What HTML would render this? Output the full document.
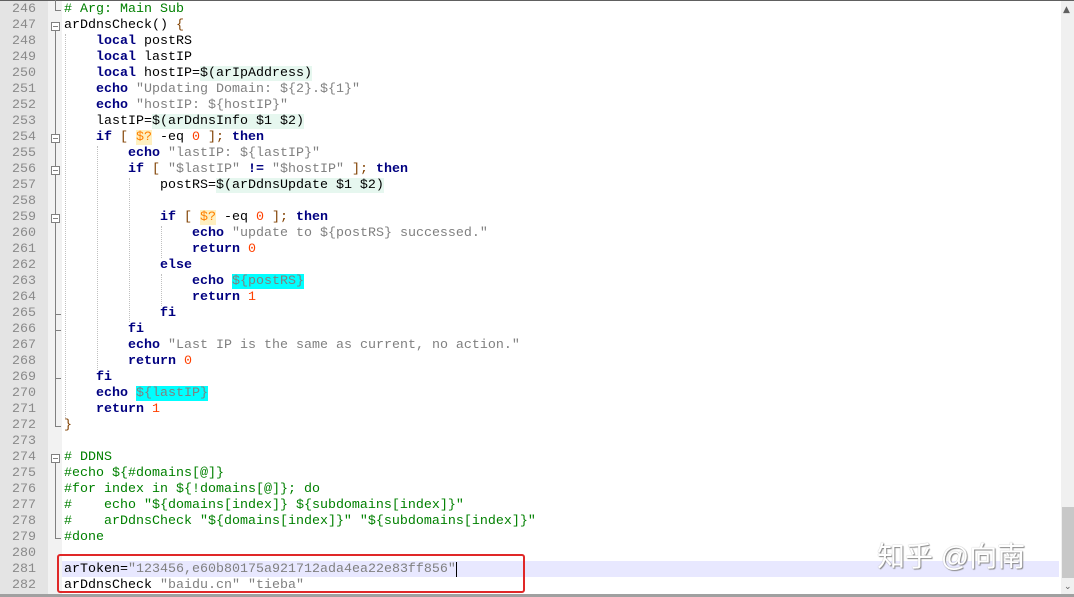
<!DOCTYPE html>
<html><head><meta charset="utf-8"><style>
html,body{margin:0;padding:0;width:1074px;height:597px;overflow:hidden;background:#fff}
body{position:relative;font-family:"Liberation Mono","Courier New",monospace;font-size:13.33px}
.gut{position:absolute;left:0;top:0;width:48px;height:594px;background:#e4e4e4}
.fold{position:absolute;left:48px;top:0;width:14px;height:594px;background:#f2f2f2}
.ln{position:absolute;left:0;width:36px;text-align:right;color:#8a8a8a;height:16px;line-height:16px;margin-top:2px}
.l{position:absolute;left:64px;height:16px;line-height:16px;white-space:pre;color:#000;margin-top:2px}
.k{color:#000080;font-weight:bold}
.s{color:#808080}
.c{color:#008000}
.n{color:#ff4000}
.v{background:#e6f7ef}
.q{background:#fff0c0;color:#ff8000}
.h{background:#00ffff;color:#808080}
.bx{position:absolute;left:51px;width:9px;height:9px;border:1px solid #808080;background:#fff;box-sizing:border-box}
.bx:after{content:"";position:absolute;left:1px;top:3px;width:5px;height:1px;background:#808080}
.vl{position:absolute;left:55px;width:1px;background:#808080}
.tk{position:absolute;left:55px;width:6px;height:1px;background:#808080}
.gd{position:absolute;width:0;border-left:1px dotted #c0c0c0}
</style></head><body>
<div class="gut"></div><div class="fold"></div>
<div style="position:absolute;left:62px;top:561px;width:997px;height:16px;background:#e8e8ff"></div>
<div style="position:absolute;left:0;top:594px;width:1074px;height:3px;background:#a0a0a0"></div>
<div style="position:absolute;left:0;top:0;width:1074px;height:1px;background:#606060"></div>

<div class="vl" style="top:0;height:10px"></div><div class="tk" style="top:10px"></div>
<div class="bx" style="top:22px"></div>
<div class="vl" style="top:31px;height:396px"></div>
<div class="bx" style="top:134px"></div>
<div class="bx" style="top:166px"></div>
<div class="bx" style="top:214px"></div>
<div class="tk" style="top:314px"></div>
<div class="tk" style="top:330px"></div>
<div class="tk" style="top:378px"></div>
<div class="tk" style="top:426px"></div>
<div class="bx" style="top:454px"></div>
<div class="vl" style="top:463px;height:76px"></div><div class="tk" style="top:538px"></div>
<div class="gd" style="left:97px;top:146px;height:224px"></div>
<div class="gd" style="left:129px;top:178px;height:144px"></div>
<div class="gd" style="left:161px;top:226px;height:32px"></div>
<div class="gd" style="left:161px;top:274px;height:32px"></div>
<div class="gd" style="left:65px;top:34px;height:384px"></div>

<div class="ln" style="top:0">246</div><div class="l" style="top:0"><span class="c"># Arg: Main Sub</span></div>
<div class="ln" style="top:16px">247</div><div class="l" style="top:16px">arDdnsCheck() <span style="color:#804000">{</span></div>
<div class="ln" style="top:32px">248</div><div class="l" style="top:32px">    <span class="k">local</span> postRS</div>
<div class="ln" style="top:48px">249</div><div class="l" style="top:48px">    <span class="k">local</span> lastIP</div>
<div class="ln" style="top:64px">250</div><div class="l" style="top:64px">    <span class="k">local</span> hostIP=<span class="v">$(arIpAddress)</span></div>
<div class="ln" style="top:80px">251</div><div class="l" style="top:80px">    <span class="k">echo</span> <span class="s">"Updating Domain: ${2}.${1}"</span></div>
<div class="ln" style="top:96px">252</div><div class="l" style="top:96px">    <span class="k">echo</span> <span class="s">"hostIP: ${hostIP}"</span></div>
<div class="ln" style="top:112px">253</div><div class="l" style="top:112px">    lastIP=<span class="v">$(arDdnsInfo $1 $2)</span></div>
<div class="ln" style="top:128px">254</div><div class="l" style="top:128px">    <span class="k">if</span> <span style="color:#804000">[</span> <span class="q">$?</span> -eq <span class="n">0</span> <span style="color:#804000">];</span> <span class="k">then</span></div>
<div class="ln" style="top:144px">255</div><div class="l" style="top:144px">        <span class="k">echo</span> <span class="s">"lastIP: ${lastIP}"</span></div>
<div class="ln" style="top:160px">256</div><div class="l" style="top:160px">        <span class="k">if</span> <span style="color:#804000">[</span> <span class="s">"$lastIP"</span> <span class="k">!=</span> <span class="s">"$hostIP"</span> <span style="color:#804000">];</span> <span class="k">then</span></div>
<div class="ln" style="top:176px">257</div><div class="l" style="top:176px">            postRS=<span class="v">$(arDdnsUpdate $1 $2)</span></div>
<div class="ln" style="top:192px">258</div>
<div class="ln" style="top:208px">259</div><div class="l" style="top:208px">            <span class="k">if</span> <span style="color:#804000">[</span> <span class="q">$?</span> -eq <span class="n">0</span> <span style="color:#804000">];</span> <span class="k">then</span></div>
<div class="ln" style="top:224px">260</div><div class="l" style="top:224px">                <span class="k">echo</span> <span class="s">"update to ${postRS} successed."</span></div>
<div class="ln" style="top:240px">261</div><div class="l" style="top:240px">                <span class="k">return</span> <span class="n">0</span></div>
<div class="ln" style="top:256px">262</div><div class="l" style="top:256px">            <span class="k">else</span></div>
<div class="ln" style="top:272px">263</div><div class="l" style="top:272px">                <span class="k">echo</span> <span class="h">${postRS}</span></div>
<div class="ln" style="top:288px">264</div><div class="l" style="top:288px">                <span class="k">return</span> <span class="n">1</span></div>
<div class="ln" style="top:304px">265</div><div class="l" style="top:304px">            <span class="k">fi</span></div>
<div class="ln" style="top:320px">266</div><div class="l" style="top:320px">        <span class="k">fi</span></div>
<div class="ln" style="top:336px">267</div><div class="l" style="top:336px">        <span class="k">echo</span> <span class="s">"Last IP is the same as current, no action."</span></div>
<div class="ln" style="top:352px">268</div><div class="l" style="top:352px">        <span class="k">return</span> <span class="n">0</span></div>
<div class="ln" style="top:368px">269</div><div class="l" style="top:368px">    <span class="k">fi</span></div>
<div class="ln" style="top:384px">270</div><div class="l" style="top:384px">    <span class="k">echo</span> <span class="h">${lastIP}</span></div>
<div class="ln" style="top:400px">271</div><div class="l" style="top:400px">    <span class="k">return</span> <span class="n">1</span></div>
<div class="ln" style="top:416px">272</div><div class="l" style="top:416px"><span style="color:#804000">}</span></div>
<div class="ln" style="top:432px">273</div>
<div class="ln" style="top:448px">274</div><div class="l" style="top:448px"><span class="c"># DDNS</span></div>
<div class="ln" style="top:464px">275</div><div class="l" style="top:464px"><span class="c">#echo ${#domains[@]}</span></div>
<div class="ln" style="top:480px">276</div><div class="l" style="top:480px"><span class="c">#for index in ${!domains[@]}; do</span></div>
<div class="ln" style="top:496px">277</div><div class="l" style="top:496px"><span class="c">#    echo "${domains[index]} ${subdomains[index]}"</span></div>
<div class="ln" style="top:512px">278</div><div class="l" style="top:512px"><span class="c">#    arDdnsCheck "${domains[index]}" "${subdomains[index]}"</span></div>
<div class="ln" style="top:528px">279</div><div class="l" style="top:528px"><span class="c">#done</span></div>
<div class="ln" style="top:544px">280</div>
<div class="ln" style="top:560px">281</div><div class="l" style="top:560px">arToken=<span class="s">"123456,e60b80175a921712ada4ea22e83ff856"</span><span style="border-left:1px solid #000"></span></div>
<div class="ln" style="top:576px">282</div><div class="l" style="top:576px">arDdnsCheck <span class="s">"baidu.cn"</span> <span class="s">"tieba"</span></div>

<div style="position:absolute;left:57px;top:554px;width:468px;height:39px;border:2px solid #e02828;border-radius:3px;box-sizing:border-box"></div>

<div style="position:absolute;left:1061px;top:1px;width:13px;height:593px;background:#f0f0f0"></div>
<div style="position:absolute;left:1062px;top:507px;width:12px;height:71px;background:#c8c8c8"></div>
<div style="position:absolute;left:1063px;top:5px;font-size:9px;color:#606060;font-family:'DejaVu Sans',sans-serif">▲</div>
<div style="position:absolute;left:1064px;top:582px;font-size:9px;color:#606060;font-family:'DejaVu Sans',sans-serif">⌄</div>

<div style="position:absolute;left:877px;top:535px;font-family:'Liberation Sans','Noto Sans CJK SC',sans-serif;font-size:28px;color:#fff;text-shadow:1px 1px 1px #888,0 0 1px #999;white-space:nowrap">知乎 @向南</div>
</body></html>
